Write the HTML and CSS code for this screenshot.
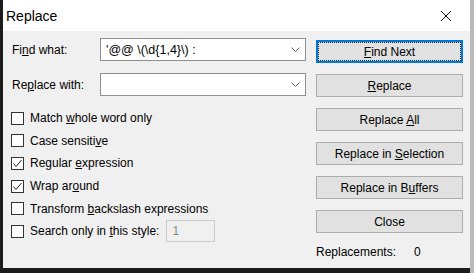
FILE: index.html
```html
<!DOCTYPE html>
<html lang="en">
<head>
    <meta charset="UTF-8">
    <meta name="viewport" content="width=device-width, initial-scale=1.0">
    <title>Replace</title>
    <link rel="stylesheet" href="styles.css">
</head>
<body>
    <div class="window">
        <div class="titlebar">
            <span class="title">Replace</span>
            <span class="close">
                <svg width="12" height="12" viewBox="0 0 12 12">
                    <path d="M1 1 L11 11 M11 1 L1 11" stroke="#111" stroke-width="1" fill="none"/>
                </svg>
            </span>
        </div>
        <div class="content">
            <div class="left">
                <div class="field">
                    <label>Fi<u>n</u>d what:</label>
                    <div class="combo">
                        <span class="value">'@@ \(\d{1,4}\) :</span>
                        <svg class="chevron" width="9" height="5" viewBox="0 0 9 5">
                            <polyline points="0.5,0.5 4.5,4.5 8.5,0.5" stroke="#606060" fill="none"/>
                        </svg>
                    </div>
                </div>
                <div class="field">
                    <label>Re<u>p</u>lace with:</label>
                    <div class="combo">
                        <span class="value"></span>
                        <svg class="chevron" width="9" height="5" viewBox="0 0 9 5">
                            <polyline points="0.5,0.5 4.5,4.5 8.5,0.5" stroke="#606060" fill="none"/>
                        </svg>
                    </div>
                </div>
                <div class="checks">
                    <div class="check"><span class="box"></span><span>Match <u>w</u>hole word only</span></div>
                    <div class="check"><span class="box"></span><span>Case sensiti<u>v</u>e</span></div>
                    <div class="check">
                        <span class="box">
                            <svg width="11" height="11" viewBox="0 0 11 11">
                                <polyline points="1.5,5.5 4,8.5 9.5,2" stroke="#222" fill="none"/>
                            </svg>
                        </span>
                        <span>Regular <u>e</u>xpression</span>
                    </div>
                    <div class="check">
                        <span class="box">
                            <svg width="11" height="11" viewBox="0 0 11 11">
                                <polyline points="1.5,5.5 4,8.5 9.5,2" stroke="#222" fill="none"/>
                            </svg>
                        </span>
                        <span>Wrap ar<u>o</u>und</span>
                    </div>
                    <div class="check"><span class="box"></span><span>Transform <u>b</u>ackslash expressions</span></div>
                    <div class="check"><span class="box"></span><span>Search only in <u>t</u>his style:</span><span class="style-input">1</span></div>
                </div>
            </div>
            <div class="right">
                <button class="btn default"><u>F</u>ind Next</button>
                <button class="btn"><u>R</u>eplace</button>
                <button class="btn">Replace <u>A</u>ll</button>
                <button class="btn">Replace in <u>S</u>election</button>
                <button class="btn">Replace in B<u>u</u>ffers</button>
                <button class="btn">Close</button>
                <div class="count"><span class="count-label">Replacements:</span><span>0</span></div>
            </div>
        </div>
    </div>
</body>
</html>
```

FILE: styles.css
```css
body {
    margin: 0;
    height: 273px;
    overflow: hidden;
    background: linear-gradient(to right, #1c1c1c 470px, #b9b9b9 470px);
    font-family: "Liberation Sans", Arial, sans-serif;
    font-size: 12px;
    color: #000;
}
.window {
    margin-left: 3px;
    width: 467px;
    height: 268px;
    background-color: #f0f0f0;
}
.titlebar {
    height: 31px;
    background-color: #fff;
    display: flex;
    align-items: center;
    justify-content: space-between;
    padding-left: 3px;
}
.title {
    font-size: 14px;
}
.close {
    width: 46px;
    display: flex;
    justify-content: center;
    margin-right: 1px;
}
.content {
    display: flex;
    padding: 7px 7px 0 8px;
}
.left {
    width: 295px;
}
.field {
    display: flex;
    align-items: center;
    height: 23px;
}
.field + .field {
    margin-top: 12px;
}
.field label {
    width: 88px;
    padding-left: 1px;
}
.combo {
    flex: 1;
    height: 23px;
    box-sizing: border-box;
    border: 1px solid #8f8f8f;
    background-color: #fff;
    display: flex;
    align-items: center;
    justify-content: space-between;
    padding: 0 5px 0 5px;
}
.combo .value {
    font-size: 12.5px;
}
.checks {
    margin-top: 11px;
    display: grid;
    grid-auto-rows: 22.6px;
}
.check {
    display: flex;
    align-items: center;
}
.box {
    width: 13px;
    height: 13px;
    box-sizing: border-box;
    border: 1px solid #333;
    background-color: #fff;
    margin-right: 6px;
    display: flex;
    align-items: center;
    justify-content: center;
}
.style-input {
    margin-left: 7px;
    width: 49px;
    height: 22px;
    box-sizing: border-box;
    border: 1px solid #cccccc;
    color: #8a8a8a;
    padding-left: 5px;
    display: flex;
    align-items: center;
}
.right {
    margin-left: 10px;
    width: 147px;
    padding-top: 2px;
    display: flex;
    flex-direction: column;
}
.btn {
    height: 23px;
    margin: 0 0 11px 0;
    box-sizing: border-box;
    border: 1px solid #adadad;
    background-color: #e1e1e1;
    font-family: inherit;
    font-size: 12px;
    color: #000;
    padding: 0;
}
.btn.default {
    border-color: #0078d7;
    box-shadow: inset 0 0 0 1px #0078d7;
    outline: 1px dotted #222;
    outline-offset: -3px;
}
.count {
    display: flex;
    line-height: 16px;
}
.count-label {
    width: 98px;
}
```
